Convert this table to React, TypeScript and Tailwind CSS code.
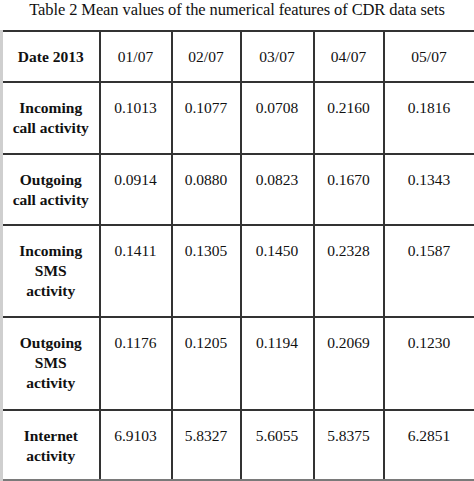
const rows = [
  { label: ["Incoming", "call activity"], values: ["0.1013", "0.1077", "0.0708", "0.2160", "0.1816"], h: "h-[72px]" },
  { label: ["Outgoing", "call activity"], values: ["0.0914", "0.0880", "0.0823", "0.1670", "0.1343"], h: "h-[71px]" },
  { label: ["Incoming", "SMS", "activity"], values: ["0.1411", "0.1305", "0.1450", "0.2328", "0.1587"], h: "h-[92px]" },
  { label: ["Outgoing", "SMS", "activity"], values: ["0.1176", "0.1205", "0.1194", "0.2069", "0.1230"], h: "h-[93px]" },
  { label: ["Internet", "activity"], values: ["6.9103", "5.8327", "5.6055", "5.8375", "6.2851"], h: "h-[70px]" },
];

const dates = ["01/07", "02/07", "03/07", "04/07", "05/07"];

const cell = "border-2 border-[#333] text-center font-['Liberation_Serif',serif] text-[15.5px] leading-[20px] text-[#111]";

export default function App() {
  return (
    <div className="h-[481px] w-[474px] overflow-hidden bg-white font-['Liberation_Serif',serif] text-[#111]">
      <p className="h-[30px] text-center text-[16.5px] leading-[20px] tracking-[-0.1px]">
        Table 2 Mean values of the numerical features of CDR data sets
      </p>
      <table className="w-[473px] table-fixed border-collapse font-['Liberation_Serif',serif] text-[15.5px] leading-[20px]">
        <colgroup>
          <col className="w-[98px]" />
          <col className="w-[72px]" />
          <col className="w-[69px]" />
          <col className="w-[73px]" />
          <col className="w-[70px]" />
          <col className="w-[91px]" />
        </colgroup>
        <tbody>
          <tr className="h-[51px]">
            <th className={`${cell} border-l-[3px] border-l-[#cfcfcf] align-middle font-bold`}>Date 2013</th>
            {dates.map((d, i) => (
              <td key={d} className={`${cell} align-middle ${i === 4 ? "border-r-[#7a7a7a]" : ""}`}>
                {d}
              </td>
            ))}
          </tr>
          {rows.map((r, ri) => (
            <tr key={ri} className={r.h}>
              <th
                className={`${cell} border-l-[3px] border-l-[#cfcfcf] pt-[15px] align-top font-bold ${ri === 4 ? "border-b-[#7a7a7a]" : ""}`}
              >
                {r.label.map((l) => (
                  <div key={l}>{l}</div>
                ))}
              </th>
              {r.values.map((v, i) => (
                <td
                  key={i}
                  className={`${cell} pt-[15px] align-top ${i === 4 ? "border-r-[#7a7a7a]" : ""} ${ri === 4 ? "border-b-[#7a7a7a]" : ""}`}
                >
                  {v}
                </td>
              ))}
            </tr>
          ))}
        </tbody>
      </table>
    </div>
  );
}
